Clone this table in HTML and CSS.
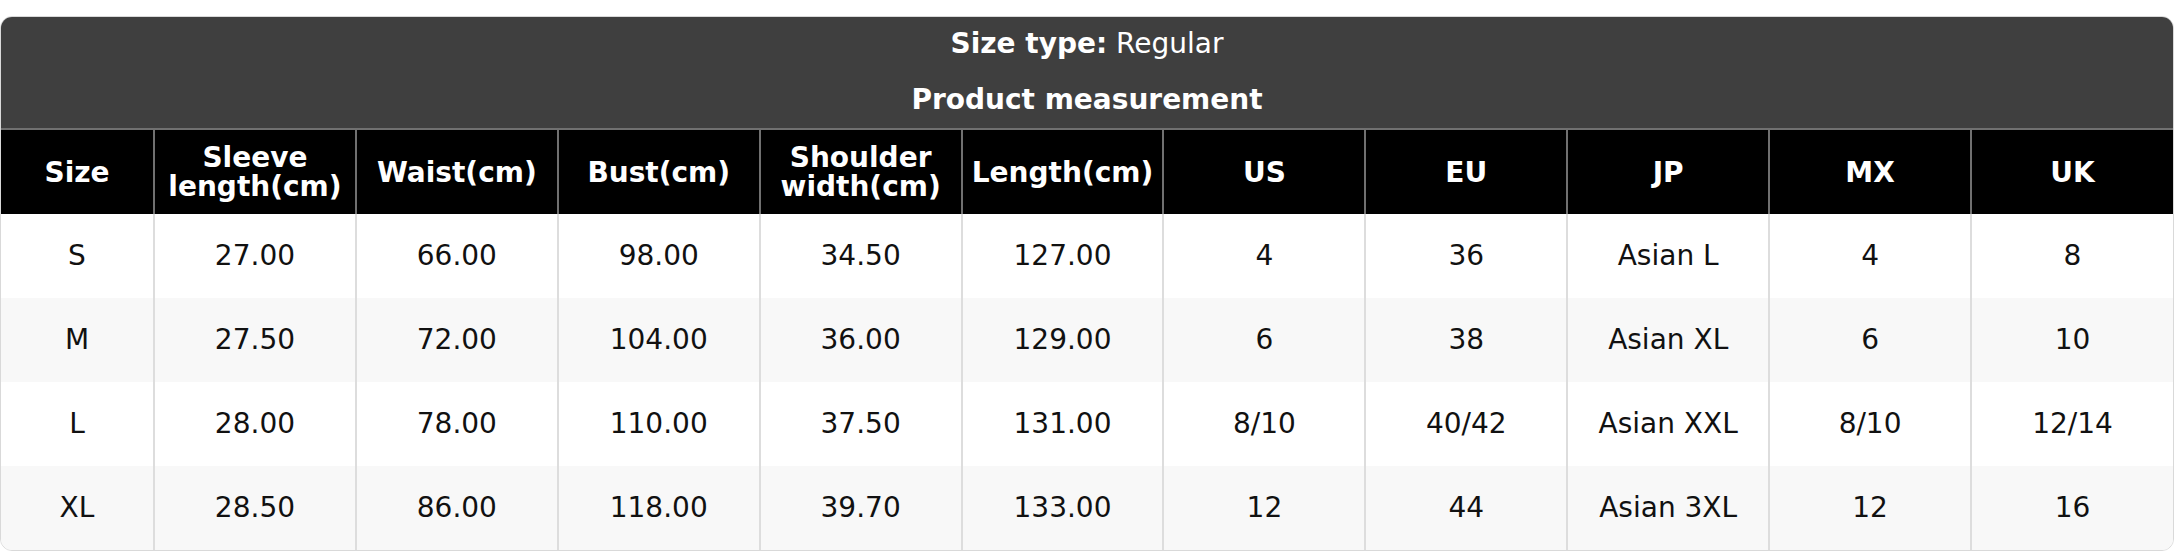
FILE: index.html
```html
<!DOCTYPE html>
<html lang="en">
<head>
<meta charset="utf-8">
<title>Size chart</title>
<link rel="stylesheet" href="styles.css">
</head>
<body>
<div class="card">
  <div class="card-head">
    <div class="line1"><strong>Size type:</strong> Regular</div>
    <div class="line2"><strong>Product measurement</strong></div>
  </div>
  <table class="chart">
    <colgroup>
      <col class="c-size">
      <col span="10">
    </colgroup>
    <thead>
      <tr>
        <th>Size</th>
        <th>Sleeve length(cm)</th>
        <th>Waist(cm)</th>
        <th>Bust(cm)</th>
        <th>Shoulder width(cm)</th>
        <th>Length(cm)</th>
        <th>US</th>
        <th>EU</th>
        <th>JP</th>
        <th>MX</th>
        <th>UK</th>
      </tr>
    </thead>
    <tbody>
      <tr>
        <td>S</td><td>27.00</td><td>66.00</td><td>98.00</td><td>34.50</td><td>127.00</td><td>4</td><td>36</td><td>Asian L</td><td>4</td><td>8</td>
      </tr>
      <tr>
        <td>M</td><td>27.50</td><td>72.00</td><td>104.00</td><td>36.00</td><td>129.00</td><td>6</td><td>38</td><td>Asian XL</td><td>6</td><td>10</td>
      </tr>
      <tr>
        <td>L</td><td>28.00</td><td>78.00</td><td>110.00</td><td>37.50</td><td>131.00</td><td>8/10</td><td>40/42</td><td>Asian XXL</td><td>8/10</td><td>12/14</td>
      </tr>
      <tr>
        <td>XL</td><td>28.50</td><td>86.00</td><td>118.00</td><td>39.70</td><td>133.00</td><td>12</td><td>44</td><td>Asian 3XL</td><td>12</td><td>16</td>
      </tr>
    </tbody>
  </table>
</div>
</body>
</html>
```

FILE: styles.css
```css
html, body {
  margin: 0;
  padding: 0;
  background: #ffffff;
}

body {
  padding-top: 16px;
  font-family: "DejaVu Sans", "Liberation Sans", sans-serif;
  color: #111111;
}

.card {
  border: 1px solid #d9d9d9;
  border-radius: 12px;
  overflow: hidden;
  background: #ffffff;
}

.card-head {
  background: #3f3f3f;
  color: #ffffff;
  text-align: center;
  font-size: 28px;
  padding: 7px 0 8px;
}

.card-head strong {
  font-weight: bold;
}

.line1 {
  line-height: 40px;
}

.line2 {
  line-height: 40px;
  margin-top: 16px;
}

.chart {
  width: 100%;
  border-collapse: collapse;
  table-layout: fixed;
}

.c-size {
  width: 153px;
}

.chart th {
  background: #000000;
  color: #ffffff;
  font-size: 28px;
  font-weight: bold;
  line-height: 29px;
  height: 84px;
  padding: 0 6px;
  text-align: center;
  vertical-align: middle;
  border-top: 2px solid #707070;
  border-left: 2px solid #707070;
  border-right: 2px solid #707070;
}

.chart th:first-child,
.chart td:first-child {
  border-left: none;
}

.chart th:last-child,
.chart td:last-child {
  border-right: none;
}

.chart td {
  font-size: 28px;
  line-height: 32px;
  height: 84px;
  padding: 0 6px;
  text-align: center;
  vertical-align: middle;
  border-left: 2px solid #dddddd;
  border-right: 2px solid #dddddd;
}

.chart tbody tr:nth-child(even) td {
  background: #f8f8f8;
}
```
